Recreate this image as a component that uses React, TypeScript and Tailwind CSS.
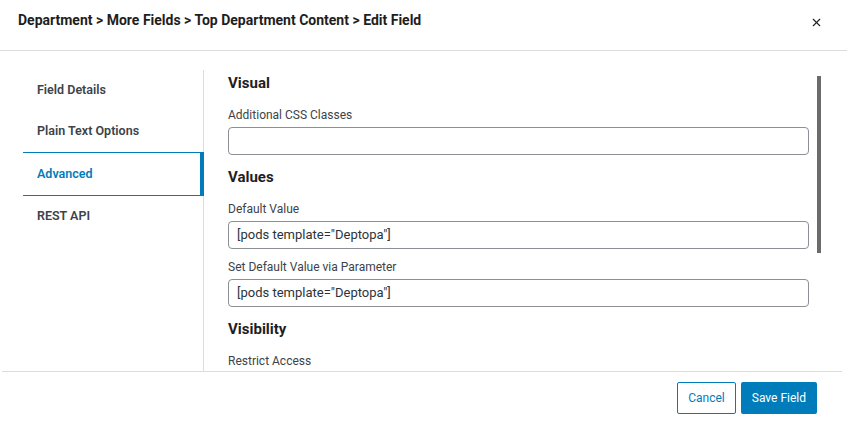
import { X } from "lucide-react"

const navItems = ["Field Details", "Plain Text Options", "Advanced", "REST API"]

function Label({ children, className = "" }: { children: React.ReactNode; className?: string }) {
  return <div className={`text-[12px] leading-[16px] text-[#3c434a] ${className}`}>{children}</div>
}

function Field({ value = "" }: { value?: string }) {
  return (
    <div className="mt-1 h-[28px] w-[581px] rounded-[4px] border border-[#8c8f94] px-2 flex items-center text-[13px] text-[#2c3338]">
      {value}
    </div>
  )
}

function Heading({ children, className = "" }: { children: React.ReactNode; className?: string }) {
  return <h3 className={`text-[15px] leading-[20px] font-bold text-[#1e1e1e] ${className}`}>{children}</h3>
}

export default function App() {
  return (
    <div className="w-[847px] h-[424px] bg-white flex flex-col overflow-hidden font-['Roboto',sans-serif]">
      {/* header */}
      <div className="h-[51px] shrink-0 border-b border-[#dcdcde] flex items-start justify-between pl-[18px] pr-[24px] pt-[12px]">
        <h1 className="text-[14px] leading-[16px] font-bold text-[#1e1e1e]">
          Department &gt; More Fields &gt; Top Department Content &gt; Edit Field
        </h1>
        <X className="w-[13px] h-[13px] mt-[4px] text-[#1e1e1e]" strokeWidth={2} />
      </div>

      {/* body */}
      <div className="flex-1 flex min-h-0">
        <nav className="w-[181px] ml-[23px] mt-[19px] border-r border-[#dcdcde] shrink-0">
          {navItems.map((item) => {
            const active = item === "Advanced"
            return (
              <div
                key={item}
                className={
                  active
                    ? "h-[44px] flex items-center pl-[14px] text-[12.5px] font-semibold text-[#007cba] border-y border-[#007cba] border-r-4 -mr-px"
                    : "h-[41px] flex items-center pl-[14px] text-[12.5px] font-semibold text-[#3c434a]"
                }
              >
                {item}
              </div>
            )
          })}
        </nav>

        <div className="relative flex-1 overflow-hidden pl-[24px] pt-[22px]">
          <Heading>Visual</Heading>
          <Label className="mt-[14px]">Additional CSS Classes</Label>
          <Field />

          <Heading className="mt-[12px]">Values</Heading>
          <Label className="mt-[14px]">Default Value</Label>
          <Field value={'[pods template="Deptopa"]'} />
          <Label className="mt-[10px]">Set Default Value via Parameter</Label>
          <Field value={'[pods template="Deptopa"]'} />

          <Heading className="mt-[12px]">Visibility</Heading>
          <Label className="mt-[14px]">Restrict Access</Label>

          {/* scrollbar thumb */}
          <div className="absolute top-[25px] right-[26px] w-[4px] h-[177px] bg-[#6b6b6b]" />
        </div>
      </div>

      {/* footer */}
      <div className="h-[53px] shrink-0 ml-[2px] mr-[5px] border-t border-[#dcdcde] flex items-center justify-end gap-[5px] pr-[25px]">
        <button className="h-[32px] px-[10px] rounded-[2px] border border-[#007cba] text-[12px] text-[#007cba] bg-white">
          Cancel
        </button>
        <button className="h-[32px] px-[11px] rounded-[2px] bg-[#007cba] text-[12px] text-white">
          Save Field
        </button>
      </div>
    </div>
  )
}
